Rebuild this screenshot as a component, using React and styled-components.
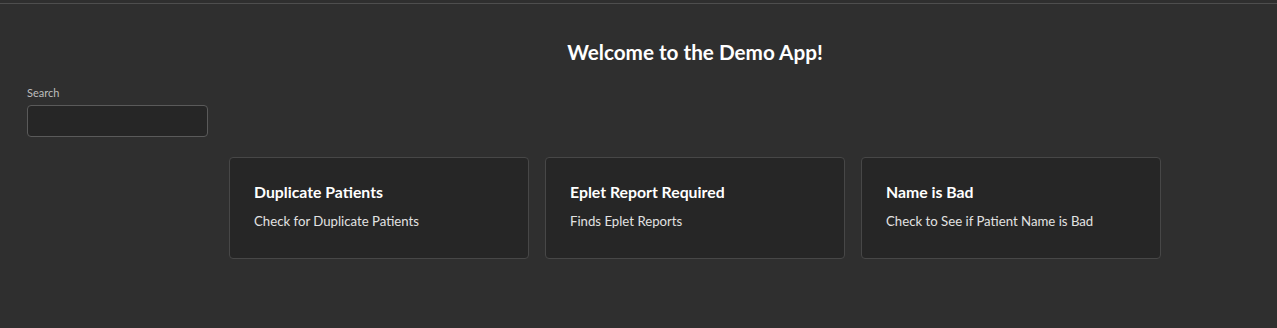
import React from 'react';
import styled, { createGlobalStyle } from 'styled-components';

const bgColor = '#2f2f2f';
const panelColor = '#262626';
const borderColor = '#474747';
const textColor = '#ffffff';
const mutedColor = '#bdbdbd';

const GlobalStyle = createGlobalStyle`
  html, body {
    margin: 0;
    padding: 0;
    background-color: ${bgColor};
    font-family: Lato, "Open Sans", sans-serif;
  }
`;

const Page = styled.div`
  min-height: 328px;
  border-top: 1px solid #4e4e4e;
  margin-top: 3px;
  box-sizing: border-box;
  display: flex;
  flex-direction: row;
  align-items: flex-start;
  padding: 0 0 0 27px;
`;

const Sidebar = styled.aside`
  width: 181px;
  padding-top: 82px;
  display: flex;
  flex-direction: column;
`;

const Label = styled.label`
  font-size: 11px;
  color: ${mutedColor};
  margin-bottom: 6px;
`;

const Input = styled.input`
  box-sizing: border-box;
  width: 181px;
  height: 32px;
  background-color: ${panelColor};
  border: 1px solid #5a5a5a;
  border-radius: 4px;
  color: ${textColor};
  padding: 0 8px;
  outline: none;
`;

const Main = styled.main`
  width: 932px;
  margin-left: 21px;
  display: flex;
  flex-direction: column;
  align-items: center;
`;

const Title = styled.h1`
  margin: 34px 0 0 0;
  font-size: 20.7px;
  font-weight: 700;
  color: ${textColor};
  line-height: 28px;
`;

const Cards = styled.div`
  margin-top: 91px;
  display: grid;
  grid-template-columns: repeat(3, 300px);
  gap: 16px;
`;

const Card = styled.div`
  box-sizing: border-box;
  height: 102px;
  padding: 24px 24px;
  background-color: ${panelColor};
  border: 1px solid ${borderColor};
  border-radius: 4px;
`;

const CardTitle = styled.h2`
  margin: 0;
  font-size: 15.8px;
  font-weight: 700;
  color: ${textColor};
  line-height: 20px;
`;

const CardText = styled.p`
  margin: 10px 0 0 0;
  font-size: 13.2px;
  color: #e2e2e2;
  line-height: 18px;
`;

const checks = [
  { title: 'Duplicate Patients', text: 'Check for Duplicate Patients' },
  { title: 'Eplet Report Required', text: 'Finds Eplet Reports' },
  { title: 'Name is Bad', text: 'Check to See if Patient Name is Bad' },
];

const App = () => (
  <>
    <GlobalStyle />
    <Page>
      <Sidebar>
        <Label htmlFor="search">Search</Label>
        <Input id="search" type="text" />
      </Sidebar>
      <Main>
        <Title>Welcome to the Demo App!</Title>
        <Cards>
          {checks.map((c) => (
            <Card key={c.title}>
              <CardTitle>{c.title}</CardTitle>
              <CardText>{c.text}</CardText>
            </Card>
          ))}
        </Cards>
      </Main>
    </Page>
  </>
);

export default App;
